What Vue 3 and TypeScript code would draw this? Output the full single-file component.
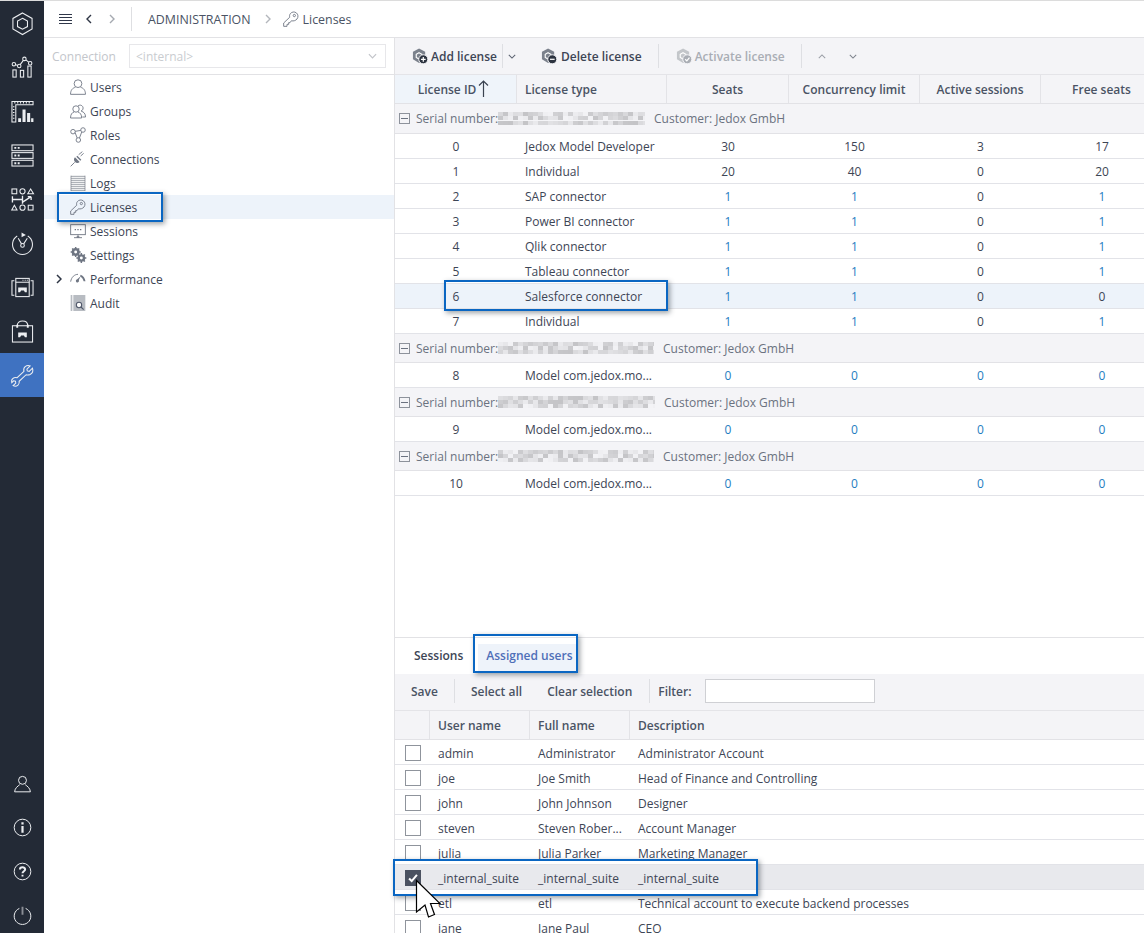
<script setup lang="ts">
const railTop = [
  { id: 'logo', svg: '<path d="M12 1 22 6.7V17.8L12 23.5 2 17.8V6.7Z"/><path d="M12 6.6 17.2 9.5V15.2L12 18 6.8 15.2V9.5Z"/>' },
  { id: 'chart', svg: '<rect x="2" y="14.5" width="3.4" height="7.5"/><rect x="9.8" y="15" width="3.4" height="7"/><rect x="17.6" y="10.5" width="3.4" height="11.5"/><circle cx="3" cy="8.5" r="1.8"/><circle cx="8.6" cy="10.5" r="1.8"/><circle cx="14" cy="3" r="1.8"/><circle cx="20" cy="7.5" r="1.8"/><path d="M4.8 9 6.9 9.9M9.6 9 12.9 4.6M15.6 4 18.4 6.4"/>' },
  { id: 'report', svg: '<path d="M1 1.5H23V5H5V23H1Z"/><path d="M4 2v1.6M7 2v1.6M10 2v1.6M13 2v1.6M16 2v1.6M19 2v1.6M2 7h1.6M2 10h1.6M2 13h1.6M2 16h1.6M2 19h1.6"/><path class="solid" d="M7.5 19h3v4h-3ZM12 10h3.2v13H12ZM16.8 13.5H20V23h-3.2ZM21 19h2.4v4H21Z"/>' },
  { id: 'server', svg: '<rect x="1" y="1" width="22" height="6"/><rect x="1" y="9" width="22" height="6"/><rect x="1" y="17" width="22" height="6"/><path class="solid" d="M3.5 3h2v2h-2ZM7 3h2v2H7ZM3.5 11h2v2h-2ZM7 11h2v2H7ZM3.5 19h2v2h-2ZM7 19h2v2H7Z"/>' },
  { id: 'flow', svg: '<rect x="1" y="1" width="5" height="5"/><circle cx="12" cy="3.500" r="2.700"/><path d="M20.500 1 23.500 6H17.500Z"/><path d="M3.500 18 6.300 23H.8Z"/><circle cx="12" cy="20.500" r="2.700"/><rect x="18" y="18" width="5" height="5"/><path class="thick2" d="M1.500 8.500v6.500M1.500 12H11.500M12 8v8.500M12.500 14.500 21 9M21 9h-3.500M21 9v3.500"/>' },
  { id: 'timer', svg: '<path d="M6.500 4.200a10.400 10.400 0 1 0 11 0"/><circle cx="12" cy="14" r="1.900"/><path d="M11 12.400 7.500 6.500M13.200 12.400 17 6.500"/><path class="solid" d="M11 .5 15.500 3 11 5.500Z"/>' },
  { id: 'app', svg: '<path d="M3.500 5H1V20H3.500M20.500 5H23V20H20.500"/><rect x="5" y="2.500" width="14" height="19"/><path d="M5 6.500H19"/><path class="solid" d="M7.500 12h9v5h-2l-1-1.800h-3L9.500 17h-2Z"/><path d="M12 4.500h1M14.300 4.500h1M16.500 4.500h1"/>' },
  { id: 'box', svg: '<rect x="1.500" y="6" width="21" height="17"/><path d="M6.500 6C6.500 2.400 9 1 12 1s5.500 1.400 5.500 5"/><path class="solid" d="M5.500 5h2v3h-2ZM16.500 5h2v3h-2ZM7.500 13h9v5h-2l-1-1.800h-3L9.500 18h-2Z"/>' },
]
const wrench = '<path d="M20 2 16.600 5.300 17 7.200 19 7.700 22.400 4.300C23.300 7 22.300 9.800 19.900 11 18.400 11.700 17 11.600 15.800 11.200L8.500 18C8.900 19.600 8.500 21 7.300 22 5.800 23.300 3.700 23.400 2.200 22.500L5 20 4.600 18 2.700 17.500 0.800 19.500C0.300 17.300 1.300 15.200 3.200 14.400 4.400 13.900 5.400 14 6.400 14.300L13.500 7.600C13 5.800 13.400 4 14.800 2.800 16.200 1.600 18.300 1.300 20 2Z"/>'
const railBottom = [
  { id: 'person', svg: '<circle cx="12" cy="8" r="5"/><path d="M2 22.500C2.500 17.500 6 15.500 8.500 13.500M22 22.500C21.500 17.500 18 15.500 15.500 13.500M2 22.500H22"/>' },
  { id: 'info', svg: '<circle cx="12" cy="12" r="10.500"/><path class="solid" d="M10.600 5.500h2.800v2.800h-2.800ZM10.600 10h2.800v8.500h-2.800Z"/>' },
  { id: 'help', svg: '<circle cx="12" cy="12" r="10.500"/><path class="thick" d="M8.800 9.500C8.800 5.800 15.300 5.800 15.300 9.400 15.300 11.700 12 11.700 12 14.300"/><path class="solid" d="M10.800 16h2.400v2.400h-2.400Z"/>' },
  { id: 'power', svg: '<path d="M8 3.100a10.500 10.500 0 1 0 8 0"/><path class="grey" d="M10.800 1h2.400v10h-2.400Z"/>' },
]
const keyIcon = '<path d="M10.200 9.200 1 18V23H6V20H8.500V17.500H10.500L12.700 14.600C15.500 15.500 19 14.500 21 12 23.300 9 22.800 5 20 2.800 17.200 .6 13.200 1.200 11.100 3.900 9.800 5.500 9.500 7.500 10.200 9.200Z"/><circle cx="17" cy="6.800" r="1.700"/>'
const tree = [
  { label: 'Users', svg: '<circle cx="12" cy="7" r="5.800"/><path d="M8 12.500C4 13.500 .8 16.500 .8 23H23.200C23.200 16.500 20 13.500 16 12.500"/>' },
  { label: 'Groups', svg: '<circle cx="9" cy="9" r="4.800"/><path d="M6 13.500C3 14.500 .8 17 .8 22.500H17.500C17.500 17 15 14.500 12 13.500"/><path d="M12 4.500A4.500 4.500 0 1 1 16.500 12M17 12.500C20.500 13 23.300 16 23.300 21H18.500"/>' },
  { label: 'Roles', svg: '<circle cx="4.500" cy="7" r="3.400"/><circle cx="19.500" cy="4.500" r="3.400"/><circle cx="12.500" cy="19.500" r="3.400"/><path d="M7.600 8.300 10.800 16.500M7.800 6.500 16.200 5.100M17.600 7.500 14.200 16.500"/>' },
  { label: 'Connections', svg: '<path class="solid-g" d="M7.500 9.500 14.500 16.500C12.500 18.500 9.500 18.500 7.500 16.500 5.500 14.500 5.500 11.500 7.500 9.500ZM9.500 8.500 11 7 17 13 15.500 14.500Z"/><path d="M7 17 1 23M16 7.500 20.500 3.500M13 5.500 18.500 1"/>' },
  { label: 'Logs', svg: '<path class="fine" d="M1.500 2H22.500M1.500 5H22.500M1.500 8H22.500M1.500 11H22.500M1.500 14H22.500M1.500 17H22.500M1.500 20H22.500M1.500 23H22.500M1.500 1V24M22.500 1V24"/>' },
  { label: 'Licenses', svg: keyIcon, active: true },
  { label: 'Sessions', svg: '<rect x="1" y="2.500" width="22" height="15"/><path d="M12 17.500V21M6 22H18"/><path class="solid-g" d="M7 9h2v2H7ZM11 9h2v2h-2ZM15 9h2v2h-2ZM10 20h4v2h-4Z"/>' },
  { label: 'Settings', svg: '<circle class="solid-g" cx="8.500" cy="7.500" r="6"/><circle class="solid-g" cx="17" cy="16.500" r="5.800"/><path class="tooth" d="M8.500 0V15M1 7.500H16M3.200 2.200 13.800 12.800M13.800 2.200 3.200 12.800M17 9V24M9.500 16.500H24.500M11.700 11.200 22.300 21.800M22.300 11.200 11.700 21.800"/><circle class="hole" cx="8.500" cy="7.500" r="2.200"/><circle class="hole" cx="17" cy="16.500" r="2.200"/>' },
  { label: 'Performance', svg: '<path d="M1 16C2 9 7 5 12 5"/><path class="solid-g" d="M16 5.500C20 7 22.800 11 23.200 15.500L20.400 15.500C19.800 12 17.500 9.500 15 8Z"/><path class="solid-g" d="M16 8 13.200 13.500A2.400 2.400 0 1 1 10.800 12.400Z"/>', expand: true },
  { label: 'Audit', svg: '<path class="solid-l" d="M1 0H3.500V24H1ZM5 0H23V24H5Z"/><circle class="white-s" cx="13.500" cy="15" r="4"/><path class="white-s" d="M16.500 18 20.500 22"/>' },
]
const cols = ['License ID', 'License type', 'Seats', 'Concurrency limit', 'Active sessions', 'Free seats']

type Row = { id: number; type: string; v: (string | number)[]; link: boolean[]; selected?: boolean }
const t = true
const f = false
const groups: { serial: number; w: number; rows: Row[]; first?: boolean }[] = [
  {
    serial: 7, w: 147, first: true,
    rows: [
      { id: 0, type: 'Jedox Model Developer', v: [30, 150, 3, 17], link: [f, f, f, f] },
      { id: 1, type: 'Individual', v: [20, 40, 0, 20], link: [f, f, f, f] },
      { id: 2, type: 'SAP connector', v: [1, 1, 0, 1], link: [t, t, f, t] },
      { id: 3, type: 'Power BI connector', v: [1, 1, 0, 1], link: [t, t, f, t] },
      { id: 4, type: 'Qlik connector', v: [1, 1, 0, 1], link: [t, t, f, t] },
      { id: 5, type: 'Tableau connector', v: [1, 1, 0, 1], link: [t, t, f, t] },
      { id: 6, type: 'Salesforce connector', v: [1, 1, 0, 0], link: [t, t, f, f], selected: true },
      { id: 7, type: 'Individual', v: [1, 1, 0, 1], link: [t, t, f, t] },
    ],
  },
  { serial: 13, w: 156, rows: [{ id: 8, type: 'Model com.jedox.mo...', v: [0, 0, 0, 0], link: [t, t, t, t] }] },
  { serial: 29, w: 157, rows: [{ id: 9, type: 'Model com.jedox.mo...', v: [0, 0, 0, 0], link: [t, t, t, t] }] },
  { serial: 41, w: 156, rows: [{ id: 10, type: 'Model com.jedox.mo...', v: [0, 0, 0, 0], link: [t, t, t, t] }] },
]

// Mosaic that stands in for a pixelated serial number
function mosaic(seed: number, width: number): Record<string, string> {
  const line = (s: number) => {
    const stops: string[] = []
    let n = s
    for (let x = 0; x < width; x += 5) {
      n = (n * 37 + 11) % 101
      const g = 196 + (n % 48)
      stops.push(`rgb(${g},${g},${g + 3}) ${x}px ${x + 5}px`)
    }
    return `linear-gradient(90deg,${stops.join(',')})`
  }
  return { width: `${width}px`, backgroundImage: `${line(seed)},${line(seed + 5)},${line(seed + 9)}` }
}

const users = [
  ['admin', 'Administrator', 'Administrator Account'],
  ['joe', 'Joe Smith', 'Head of Finance and Controlling'],
  ['john', 'John Johnson', 'Designer'],
  ['steven', 'Steven Rober...', 'Account Manager'],
  ['julia', 'Julia Parker', 'Marketing Manager'],
  ['_internal_suite', '_internal_suite', '_internal_suite'],
  ['etl', 'etl', 'Technical account to execute backend processes'],
  ['jane', 'Jane Paul', 'CEO'],
]
</script>

<template>
  <div class="app">
    <nav class="rail">
      <div v-for="item in railTop" :key="item.id" class="rail-item">
        <svg class="rail-icon" viewBox="0 0 24 24" v-html="item.svg"></svg>
      </div>
      <div class="rail-item active">
        <svg class="rail-icon" viewBox="0 0 24 24" v-html="wrench"></svg>
      </div>
      <div class="rail-bottom">
        <div v-for="item in railBottom" :key="item.id" class="rail-item">
          <svg class="rail-icon small" viewBox="0 0 24 24" v-html="item.svg"></svg>
        </div>
      </div>
    </nav>

    <div class="main">
      <header class="topbar">
        <svg class="menu" viewBox="0 0 13 10"><path d="M0 .5H13M0 3.500H13M0 6.500H13M0 9.500H13" /></svg>
        <svg class="chev dark" viewBox="0 0 6 10"><path d="M5 1 1 5l4 4" /></svg>
        <svg class="chev light" viewBox="0 0 6 10"><path d="M1 1l4 4-4 4" /></svg>
        <span class="top-sep"></span>
        <span class="crumb">ADMINISTRATION</span>
        <svg class="chev crumb-chev" viewBox="0 0 6 10"><path d="M1 1l4 4-4 4" /></svg>
        <svg class="line-icon crumb-key" viewBox="0 0 24 24" v-html="keyIcon"></svg>
        <span class="crumb-page">Licenses</span>
      </header>

      <div class="body">
        <aside class="left">
          <div class="conn">
            <span class="conn-label">Connection</span>
            <div class="conn-select">
              <span>&lt;internal&gt;</span>
              <svg class="conn-chev" viewBox="0 0 10 6"><path d="M1 1l4 4 4-4" /></svg>
            </div>
          </div>
          <ul class="tree">
            <li v-for="n in tree" :key="n.label" class="tree-row" :class="{ on: n.active }">
              <span class="tree-exp">
                <svg v-if="n.expand" viewBox="0 0 6 10"><path d="M1 1l4 4-4 4" /></svg>
              </span>
              <svg class="line-icon tree-icon" viewBox="0 0 24 24" v-html="n.svg"></svg>
              <span>{{ n.label }}</span>
            </li>
          </ul>
        </aside>

        <section class="right">
          <div class="upper">
            <div class="toolbar lic-bar">
              <span class="tool">
                <svg class="hex" viewBox="0 0 17 17">
                  <path class="hex-b" d="M7.500 .5 14 4V12L7.500 16 1 12V4Z" /><path class="hex-i" d="M7.500 5 10.500 6.700V10L7.500 11.800 4.500 10V6.700Z" />
                  <circle class="badge" cx="12" cy="12" r="4.800" /><path class="badge-s" d="M9.500 12H14.500M12 9.500V14.500" />
                </svg>
                Add license
              </span>
              <span class="bar-sep s1"></span>
              <svg class="tool-chev c1" viewBox="0 0 10 6"><path d="M1 1l4 4 4-4" /></svg>
              <span class="tool t-del">
                <svg class="hex" viewBox="0 0 17 17">
                  <path class="hex-b" d="M7.500 .5 14 4V12L7.500 16 1 12V4Z" /><path class="hex-i" d="M7.500 5 10.500 6.700V10L7.500 11.800 4.500 10V6.700Z" />
                  <circle class="badge" cx="12" cy="12" r="4.800" /><path class="badge-s" d="M9.500 12H14.500" />
                </svg>
                Delete license
              </span>
              <span class="bar-sep s2"></span>
              <span class="tool off t-act">
                <svg class="hex" viewBox="0 0 17 17">
                  <path class="hex-b" d="M7.500 .5 14 4V12L7.500 16 1 12V4Z" /><path class="hex-i" d="M7.500 5 10.500 6.700V10L7.500 11.800 4.500 10V6.700Z" />
                  <circle class="badge" cx="12" cy="12" r="4.800" /><path class="badge-s" d="M9.800 12 11.500 13.700 14.300 10.300" />
                </svg>
                Activate license
              </span>
              <span class="bar-sep s3"></span>
              <svg class="tool-chev up" viewBox="0 0 10 6"><path d="M1 5l4-4 4 4" /></svg>
              <svg class="tool-chev dn" viewBox="0 0 10 6"><path d="M1 1l4 4 4-4" /></svg>
            </div>

            <div class="lic-grid lic-head">
              <div v-for="(c, i) in cols" :key="c" class="lh" :class="['lh' + i]">
                <span>{{ c }}</span>
                <svg v-if="i === 0" class="sort" viewBox="0 0 11 18"><path d="M5.500 17V1M1 5.500 5.500 1 10 5.500" /></svg>
              </div>
            </div>

            <template v-for="g in groups" :key="g.serial">
              <div class="group" :class="{ first: g.first }">
                <span class="collapse"></span>
                <span class="g-label">Serial number:</span>
                <span class="mosaic" :style="mosaic(g.serial, g.w)"></span>
                <span class="g-label">Customer: Jedox GmbH</span>
              </div>
              <div v-for="r in g.rows" :key="r.id" class="lic-grid lic-row" :class="{ sel: r.selected }">
                <div class="c-id">{{ r.id }}</div>
                <div class="c-type">{{ r.type }}</div>
                <div v-for="(val, i) in r.v" :key="i" class="c-num" :class="{ link: r.link[i] }">{{ val }}</div>
              </div>
            </template>
          </div>

          <div class="lower">
            <div class="tabs">
              <span class="tab">Sessions</span>
              <span class="tab cur">Assigned users</span>
            </div>
            <div class="toolbar user-bar">
              <span class="ub save">Save</span>
              <span class="ub-sep"></span>
              <span class="ub sel-all">Select all</span>
              <span class="ub clear">Clear selection</span>
              <span class="ub-sep"></span>
              <span class="ub filter">Filter:</span>
              <span class="filter-box"></span>
            </div>
            <div class="u-grid u-head">
              <div></div>
              <div>User name</div>
              <div>Full name</div>
              <div>Description</div>
            </div>
            <div v-for="u in users" :key="u[0]" class="u-grid u-row" :class="{ sel: u[0] === '_internal_suite' }">
              <div class="u-check">
                <span class="check" :class="{ ticked: u[0] === '_internal_suite' }">
                  <svg v-if="u[0] === '_internal_suite'" viewBox="0 0 16 16"><path d="M3.500 8.500 6.500 11.500 12.500 4.500" /></svg>
                </span>
              </div>
              <div>{{ u[0] }}</div>
              <div>{{ u[1] }}</div>
              <div class="u-desc">{{ u[2] }}</div>
            </div>
          </div>
        </section>
      </div>
    </div>

    <div class="mark m-lic"></div>
    <div class="mark m-sales"></div>
    <div class="mark m-tab"></div>
    <div class="mark m-user"></div>
    <svg class="cursor" viewBox="0 0 26 40">
      <path d="M1.500 1.500V33L10 26 13.500 38 19.500 35.500 15.500 24.500H25Z" />
    </svg>
  </div>
</template>

<style>
html, body { margin: 0; padding: 0; background: #fff; }
</style>

<style scoped>
* { box-sizing: border-box; }
.app {
  position: relative;
  display: flex;
  width: 1144px;
  height: 933px;
  overflow: hidden;
  border-top: 1px solid #dcdcdc;
  background: #fff;
  color: #3d4555;
  font-family: "Open Sans", "Noto Sans", sans-serif;
  font-size: 12px;
}

/* Rail */
.rail { width: 44px; flex: none; display: flex; flex-direction: column; background: #232a36; color: #eceef1; }
.rail-item { height: 44px; flex: none; display: flex; align-items: center; justify-content: center; }
.rail-item.active { background: #3f72c1; }
.rail-icon { width: 23px; height: 23px; fill: none; stroke: currentColor; stroke-width: 1.100; overflow: visible; }
.rail-icon.small { width: 19px; height: 19px; stroke-width: 1.250; }
.rail-icon :deep(.solid) { fill: currentColor; stroke: none; }
.rail-icon :deep(.grey) { fill: #8a8e96; stroke: none; }
.rail-icon :deep(.thick) { stroke-width: 2.600; }
.rail-icon :deep(.thick2) { stroke-width: 1.400; }
.rail-bottom { margin-top: auto; margin-bottom: -4px; }

.main { flex: 1; min-width: 0; display: flex; flex-direction: column; }

/* Top bar */
.topbar { height: 37px; flex: none; display: flex; align-items: center; border-bottom: 1px solid #e2e2e5; padding-left: 15px; }
.menu { width: 13px; height: 10px; fill: none; stroke: #30384a; stroke-width: 1; }
.chev { width: 6px; height: 10px; fill: none; stroke-width: 1.400; }
.chev.dark { stroke: #2e3544; margin-left: 14px; }
.chev.light { stroke: #a5a9b0; margin-left: 17px; }
.top-sep { width: 1px; height: 24px; background: #dedfe2; margin-left: 16px; }
.crumb { margin-left: 16px; font-size: 12.400px; color: #4a5364; font-weight: 500; }
.crumb-chev { stroke: #b3b6bc; margin-left: 14px; }
.crumb-key { margin-left: 12px; }
.crumb-page { margin-left: 4px; font-size: 12.400px; color: #4a5364; font-weight: 500; }
.line-icon { width: 16px; height: 16px; fill: none; stroke: #6f7683; stroke-width: 1.350; flex: none; overflow: visible; }

.body { flex: 1; min-height: 0; display: flex; }

/* Left */
.left { width: 351px; flex: none; border-right: 1px solid #e2e2e5; }
.conn { height: 37px; display: flex; align-items: center; padding: 0 8px 0 8px; border-bottom: 1px solid #e2e2e5; }
.conn-label { width: 77px; color: #c3c6cb; font-weight: 500; }
.conn-select { flex: 1; height: 24px; border: 1px solid #e7e7ea; display: flex; align-items: center; justify-content: space-between; padding: 0 7px 0 6px; color: #c9ccd0; }
.conn-chev { width: 9px; height: 6px; fill: none; stroke: #c2c4c9; stroke-width: 1.300; margin-right: 1px; }
.tree { list-style: none; margin: 0; padding: 0; }
.tree-row { height: 24px; display: flex; align-items: center; padding-left: 12px; color: #3d4555; font-weight: 500; }
.tree-row.on { background: #edf3fa; }
.tree-exp { width: 14px; height: 10px; flex: none; }
.tree-exp svg { width: 6px; height: 10px; fill: none; stroke: #2e3544; stroke-width: 1.500; display: block; }
.tree-icon { margin-right: 4px; }
.tree-icon :deep(.solid-g) { fill: #6f7683; stroke: none; }
.tree-icon :deep(.solid-l) { fill: #b8bcc2; stroke: none; }
.tree-icon :deep(.white-s) { fill: #fff; stroke: #50586a; stroke-width: 1.600; }
.tree-icon :deep(.hole) { fill: #fff; stroke: none; }
.tree-icon :deep(.tooth) { stroke: #6f7683; stroke-width: 2.200; }
.tree-icon :deep(.fine) { stroke: #7b818c; stroke-width: 1.100; }

/* Right */
.right { flex: 1; min-width: 0; display: flex; flex-direction: column; }
.upper { flex: 1; min-height: 0; overflow: hidden; }
.toolbar { background: #f4f4f7; display: flex; align-items: center; border-bottom: 1px solid #e4e4e8; }
.lic-bar { height: 37px; padding-left: 17px; color: #3d4555; font-weight: 600; }
.tool { display: inline-flex; align-items: center; gap: 3px; white-space: nowrap; }
.tool.off { color: #a9adb4; }
.t-del { margin-left: 25px; gap: 4px; }
.t-act { margin-left: 17px; }
.hex { width: 16px; height: 16px; flex: none; }
.hex-b { fill: #7b818c; }
.hex-i { fill: none; stroke: #fff; stroke-width: 1.200; }
.badge { fill: #2c3340; stroke: #f4f4f7; stroke-width: 1; }
.badge-s { fill: none; stroke: #fff; stroke-width: 1.300; }
.off .hex-b { fill: #c3c6ca; }
.off .badge { fill: #a9adb4; }
.bar-sep { width: 1px; height: 24px; background: #dedfe3; }
.s1 { margin-left: 5px; }
.s2 { margin-left: 16px; }
.s3 { margin-left: 16px; }
.tool-chev { width: 8px; height: 5px; fill: none; stroke-width: 1.300; stroke: #5a6170; }
.c1 { margin-left: 5px; }
.up { margin-left: 16px; stroke: #9a9ea6; }
.dn { margin-left: 23px; stroke: #7d828c; }

.lic-grid { display: grid; grid-template-columns: 122px 150px 122px 131px 121px 122px; width: 768px; }
.lic-head { height: 29px; background: #f4f4f7; border-bottom: 1px solid #e2e2e6; }
.lh { display: flex; align-items: center; justify-content: center; border-right: 1px solid #e3e3e7; color: #4a5364; font-weight: 600; white-space: nowrap; }
.lh0 { background: #eff4fa; gap: 2px; padding-right: 4px; }
.lh1 { justify-content: flex-start; padding-left: 8px; }
.sort { width: 11px; height: 18px; fill: none; stroke: #3a4250; stroke-width: 1.200; }
.group { height: 29px; display: flex; align-items: center; background: #f4f4f7; border-bottom: 1px solid #e2e2e6; padding-left: 4px; color: #6b7280; }
.group.first { height: 30px; }
.collapse { width: 11px; height: 11px; border: 1px solid #8d929b; position: relative; margin-right: 6px; flex: none; }
.collapse::after { content: ""; position: absolute; left: 1px; right: 1px; top: 4px; height: 1px; background: #6b7280; }
.mosaic { height: 13px; margin: 0 9px 0 0; background-repeat: no-repeat; background-size: 100% 33%; background-position: 0 0, 0 50%, 0 100%; filter: blur(.6px); flex: none; }
.lic-row { height: 25px; border-bottom: 1px solid #e2e3e8; align-items: center; }
.lic-row.sel { background: #edf3fa; }
.c-id, .c-num { text-align: center; }
.c-type { padding-left: 8px; white-space: nowrap; }
.link { color: #1f7dc1; }

/* Lower */
.lower { height: 296px; flex: none; border-top: 1px solid #e2e2e5; overflow: hidden; }
.tabs { height: 36px; display: flex; align-items: flex-end; }
.tab { height: 30px; display: flex; align-items: center; padding: 0 6px 8px; margin-left: 13px; color: #3d4555; font-weight: 600; white-space: nowrap; }
.tab.cur { margin-left: 9px; padding: 0 5px 8px 8px; background: #eef3fa; color: #4f6fb8; }
.user-bar { height: 37px; padding-bottom: 2px; color: #4a5364; font-weight: 600; }
.ub { white-space: nowrap; }
.save { margin-left: 16px; }
.ub-sep { width: 1px; height: 24px; background: #dedfe3; }
.save + .ub-sep { margin-left: 16px; }
.sel-all { margin-left: 16px; }
.clear { margin-left: 25px; }
.clear + .ub-sep { margin-left: 17px; }
.filter { margin-left: 8px; }
.filter-box { width: 170px; height: 24px; margin-left: 13px; background: #fff; border: 1px solid #cfd0d4; }
.u-grid { display: grid; grid-template-columns: 34px 100px 100px 1fr; align-items: center; }
.u-head { height: 29px; background: #f4f4f7; border-bottom: 1px solid #e2e2e6; color: #4a5364; font-weight: 600; align-items: stretch; }
.u-head > div { display: flex; align-items: center; padding-left: 8px; border-left: 1px solid #e3e3e7; }
.u-head > div:first-child { border-left: 0; }
.u-row { height: 25px; padding-top: 2px; border-bottom: 1px solid #e2e3e8; white-space: nowrap; }
.u-row > div:not(.u-check) { padding-left: 9px; }
.u-row.sel { background: #e8e9ed; }
.u-check { display: flex; padding-left: 10px; }
.check { width: 16px; height: 16px; border: 1px solid #8f949c; background: #fff; display: block; }
.check.ticked { background: #4b5261; border-color: #4b5261; }
.check svg { display: block; width: 14px; height: 14px; fill: none; stroke: #fff; stroke-width: 2.300; }

/* Annotations drawn over the screenshot */
.mark { position: absolute; border: 2px solid #0a66c2; box-shadow: 2px 2px 5px rgba(40, 50, 60, .45); pointer-events: none; }
.m-lic { left: 57px; top: 191px; width: 106px; height: 30px; }
.m-sales { left: 444px; top: 279px; width: 224px; height: 31px; }
.m-tab { left: 473px; top: 633px; width: 105px; height: 39px; }
.m-user { left: 393px; top: 858px; width: 365px; height: 37px; }
.cursor { position: absolute; left: 415px; top: 878px; width: 26px; height: 40px; fill: #fff; stroke: #000; stroke-width: 1.200; }
</style>
